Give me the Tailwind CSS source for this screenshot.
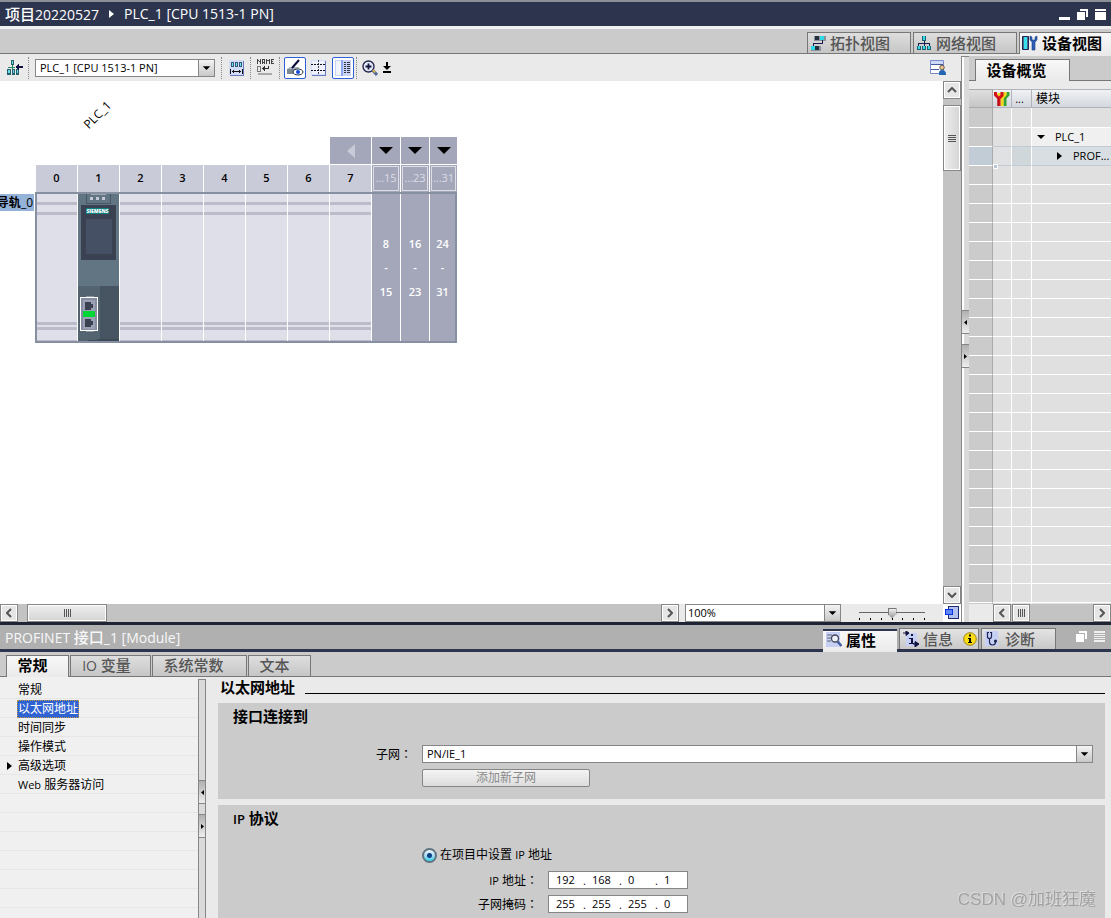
<!DOCTYPE html>
<html lang="zh-CN">

<head>
    <meta charset="UTF-8">
    <meta name="viewport" content="width=device-width, initial-scale=1.0">
    <title>项目20220527 - PLC_1</title>
    <script src="https://cdn.jsdelivr.net/npm/@tailwindcss/browser@4"></script>
</head>

<body class="flex h-screen flex-col overflow-hidden bg-[#eaeaea] font-['Open_Sans','Noto_Sans_CJK_SC',sans-serif] text-[11px] leading-4 text-black">
    <!-- title bar -->
    <header class="flex h-[29px] shrink-0 items-center border-t-2 border-b-3 border-t-[#8b8f96] border-b-[#f0f0f0] bg-[#2d354e] pr-1 pl-[5px] text-white">
        <h1 class="flex flex-1 items-center text-[14px] font-medium whitespace-nowrap">
            <span><span class="text-[15px]">项目</span>20220527</span>
            <svg class="mr-2.5 ml-2.5 h-2 w-[5px]" viewBox="0 0 5 8" fill="#fff"><path d="M0 0l5 4-5 4z" /></svg>
            <span>PLC_1 [CPU 1513-1 PN]</span>
        </h1>
        <div class="flex gap-1.5">
            <button aria-label="最小化"><svg class="h-3 w-3" viewBox="0 0 12 12" fill="#fff" shape-rendering="crispEdges"><path d="M0 9h11v3H0z" /></svg></button>
            <button aria-label="还原"><svg class="h-3 w-3" viewBox="0 0 12 12" fill="#fff" shape-rendering="crispEdges"><path d="M0 4h8v8H0zM3 1h8v8H9V3H3z" /></svg></button>
            <button aria-label="最大化"><svg class="h-3 w-3" viewBox="0 0 12 12" fill="#fff" shape-rendering="crispEdges"><path d="M0 1h11v2H0zM0 4h11v8H0z" /></svg></button>
        </div>
    </header>

    <!-- view tabs -->
    <nav class="flex h-[25px] shrink-0 items-end justify-end gap-0.5 border-b border-[#777] bg-[#cbcbcb] text-[15px] font-medium text-[#555]">
        <button class="flex h-[21px] w-[104px] items-center gap-1 border border-b-0 border-[#777] bg-linear-to-b from-[#dedede] to-[#c6c6c6] pl-0.5 leading-5">
            <svg class="h-4 w-4" viewBox="0 0 16 16" shape-rendering="crispEdges">
                <path d="M4 1h12v5H4zM1 11h10v5H1z" fill="#8b9199" /><path d="M5 1h4v4H5zM5 11h4v4H5z" fill="#24303e" /><path d="M10 1h4v4h-4zM1 11h4v4H1z" fill="#2fd9e6" />
                <path d="M12 5v3H3v3" fill="none" stroke="#1c1c50" stroke-width="1" />
            </svg>
            拓扑视图
        </button>
        <button class="flex h-[21px] w-[104px] items-center gap-1 border border-b-0 border-[#777] bg-linear-to-b from-[#dedede] to-[#c6c6c6] pl-0.5 leading-5">
            <svg class="h-4 w-4" viewBox="0 0 16 16" shape-rendering="crispEdges">
                <path d="M6 1h4v5H6zM1 11h4v4H1zM6 11h4v4H6zM11 11h4v4h-4z" fill="#24606e" /><path d="M7 1h2v4H7zM2 11h2v3H2zM7 11h2v3H7zM12 11h2v3h-2z" fill="#2fd9e6" />
                <path d="M8 6v5M2 8h12M2 8v3M13 8v3" fill="none" stroke="#1c1c50" />
            </svg>
            网络视图
        </button>
        <button class="-mb-px flex h-[22px] w-[92px] items-center gap-1 border-t border-l border-[#777] bg-linear-to-b from-[#f8f8f8] to-[#eaeaea] pb-0.5 pl-0.5 leading-5 font-bold text-black">
            <svg class="h-4 w-4" viewBox="0 0 16 16">
                <path d="M0.5 1.5h6v13h-6z" fill="#4a7188" stroke="#225" /><path d="M2 2h3v12H2z" fill="#38e0ee" />
                <path d="M8 1v4l2 2v8h3V7l2-2V1l-2 1v3h-3V2z" fill="#2c5fb4" stroke="#1c3d86" stroke-width=".6" />
            </svg>
            设备视图
        </button>
    </nav>

    <main class="flex min-h-0 flex-1">
        <!-- device view -->
        <section class="flex min-w-0 flex-1 flex-col">
            <div class="flex h-[27px] shrink-0 items-center pr-[15px] pl-[7px]">
                <button aria-label="设备"><svg class="h-4 w-4" viewBox="0 0 16 16" shape-rendering="crispEdges">
                    <path d="M4 0h3v5H4zM0 9h4v6H0zM5 9h3v6H5zM9 9h3v6H9z" fill="#28606c" /><path d="M5 1h1v3H5zM1 10h2v3H1zM6 10h1v3H6zM10 10h1v3h-1z" fill="#61dce2" />
                    <path d="M5 5v4M1 7h7" stroke="#286" fill="none" /><path d="M8 7l4-4v3h4v2h-4v3z" fill="#101040" />
                </svg></button>
                <span class="mr-1.5 ml-[5px] h-[22px] border-l border-dotted border-[#888]"></span>
                <div class="relative h-[18px] w-[180px] border border-[#868686] bg-white">
                    <select aria-label="选择设备" class="h-4 w-full appearance-none pl-1 leading-4">
                        <option>PLC_1 [CPU 1513-1 PN]</option>
                    </select>
                    <svg class="pointer-events-none absolute inset-y-0 right-0 h-4 w-4 border-l border-[#868686] bg-linear-to-b from-[#f4f4f4] to-[#c8c8c8]" viewBox="0 0 16 16"><path d="M4 6h8l-4 4z" /></svg>
                </div>
                <span class="mr-[7px] ml-1.5 h-[22px] border-l border-dotted border-[#888]"></span>
                <button aria-label="显示地址"><svg class="h-4 w-4" viewBox="0 0 16 16" shape-rendering="crispEdges">
                    <path d="M0 0h15v15H0z" fill="#d3dcf7" /><path d="M15 1v15H1v-1h13V1z" fill="#6679bd" /><path d="M2 2h3v5H2zM6 2h3v5H6zM10 2h3v5h-3z" fill="#357" /><path d="M3 3h1v3H3zM7 3h1v3H7zM11 3h1v3h-1z" fill="#6ee" />
                    <path d="M1 9h1v5H1zM13 9h1v5h-1zM3 11h9v1H3zM4 10h1v3H4zM10 10h1v3h-1z" fill="#111" />
                </svg></button>
                <span class="mr-1.5 ml-[5px] h-[22px] border-l border-dotted border-[#888]"></span>
                <button aria-label="显示名称"><svg class="h-[17px] w-[17px]" viewBox="0 0 17 17" shape-rendering="crispEdges">
                    <path d="M0 0h1v5H0zM1 1h1v1H1zM2 2h1v1H2zM3 0h1v5H3zM5 0h3v1H5zM5 0h1v5H5zM7 0h1v5H7zM5 3h3v1H5zM9 0h1v5H9zM10 1h2v1h-2zM12 0h1v5h-1zM14 0h3v1h-3zM14 0h1v5h-1zM14 2h2v1h-2zM14 4h3v1h-3z" fill="#444" />
                    <path d="M0 7h4v6H0zM1 8v4h2V8z" fill="#777" fill-rule="evenodd" /><path d="M11 7h1v3h-1zM5 9h6v1H5zM6 8h1v3H6zM7 7h1v5H7z" fill="#333" /><path d="M1 14h14v2H1z" fill="#aaa" />
                </svg></button>
                <span class="mr-1 ml-[5px] h-[22px] border-l border-dotted border-[#888]"></span>
                <button aria-label="显示标签" aria-pressed="true" class="flex h-[22px] w-[22px] items-center justify-center rounded-xs border border-[#2c62d6] bg-white"><svg class="h-[18px] w-[18px]" viewBox="0 0 18 18">
                    <path d="M1 10h10v5H1z" fill="#7d8793" /><path d="M1 10l3-2h10l-3 2z" fill="#a9b1ba" /><path d="M6 9L13 1" stroke="#0c0c3c" stroke-width="2" /><ellipse cx="12" cy="13" rx="5" ry="3" fill="#fff" stroke="#234" /><circle cx="12" cy="13" r="2" fill="#1448e0" />
                </svg></button>
                <button aria-label="网格" class="ml-[5px]"><svg class="h-4 w-4" viewBox="0 0 16 16" shape-rendering="crispEdges">
                    <path d="M0 0h15v15H0z" fill="#d5defa" /><path d="M1 1h13v13H1z" fill="#eef1fc" /><path d="M15 1v15H1v-1h13V1z" fill="#6679bd" /><path d="M7.500 0v15" stroke="#445" stroke-dasharray="2 1" /><path d="M0 4.500h15M0 10.500h15" stroke="#112" stroke-dasharray="2 1" />
                </svg></button>
                <button aria-label="设备概览" aria-pressed="true" class="ml-[5px] flex h-[22px] w-[22px] items-center justify-center rounded-xs border border-[#2c62d6] bg-white"><svg class="h-4 w-4" viewBox="0 0 16 16" shape-rendering="crispEdges">
                    <path d="M0 0h16v16H0z" fill="#c9d3f5" /><path d="M1 1h5v14H1z" fill="#f3f5fd" /><path d="M6 0h2v16H6z" fill="#8fa5ee" /><path d="M9 2h2v1H9zM12 2h3v1h-3zM9 4h2v1H9zM12 4h3v1h-3zM9 6h2v1H9zM12 6h3v1h-3zM9 8h2v1H9zM12 8h3v1h-3zM9 10h2v1H9zM12 10h3v1h-3zM9 12h2v1H9zM12 12h3v1h-3z" fill="#334" />
                </svg></button>
                <span class="mr-[5px] ml-0.5 h-[22px] border-l border-dotted border-[#888]"></span>
                <button aria-label="放大"><svg class="h-4 w-4" viewBox="0 0 16 16">
                    <circle cx="6.500" cy="6.500" r="5.500" fill="#e4ebfb" stroke="#26264e" stroke-width="1.400" /><path d="M3.500 6.500h6M6.500 3.500v6" stroke="#14143c" stroke-width="1.800" /><path d="M10.500 10l4.500 5" stroke="#4b679b" stroke-width="3" /><path d="M11 10l2 2.500" stroke="#e5b83c" stroke-width="2" />
                </svg></button>
                <button aria-label="更多" class="ml-[5px]"><svg class="h-[11px] w-2" viewBox="0 0 8 11"><path d="M3 0h2v4h3l-4 4-4-4h3zM0 9h8v2H0z" /></svg></button>
                <button aria-label="保存窗口设置" class="ml-auto"><svg class="h-4 w-4" viewBox="0 0 16 16">
                    <path d="M.5.5h13v13H.5z" fill="#fff" stroke="#7a8cc8" /><path d="M1 1h12v3H1z" fill="#cfd8f7" /><path d="M1 4.500h12M1 9.500h8" stroke="#445a9c" /><circle cx="12" cy="7.500" r="2.300" fill="#ebc28b" stroke="#333" stroke-width=".7" /><path d="M9 15v-2q0-3 3-3t4 3v2z" fill="#2467b4" />
                </svg></button>
            </div>

            <div class="flex min-h-0 flex-1">
                <!-- drawing canvas -->
                <div class="relative flex-1 overflow-hidden bg-white">
                    <span class="absolute top-[26px] left-[81px] -rotate-45 text-xs">PLC_1</span>
                    <span class="absolute top-[113px] left-0 flex h-[17px] w-[34px] items-center justify-end overflow-hidden bg-[#95b3d9] pr-px text-xs font-bold whitespace-nowrap">导轨<span class="font-normal">_0</span></span>

                    <div class="absolute top-14 left-[35px] w-[422px] text-[11px] font-semibold">
                        <div class="ml-[295px] grid grid-cols-[41px_28px_28px_27px] gap-px">
                            <button aria-label="折叠" class="flex h-[27px] items-center justify-center bg-[#a4a7ba]"><svg class="h-3.5 w-2" viewBox="0 0 8 14" fill="#c9cad8"><path d="M8 0v14L0 7z" /></svg></button>
                            <button aria-label="展开 8-15" class="flex h-[27px] items-center justify-center bg-[#a4a7ba]"><svg class="h-[7px] w-3.5" viewBox="0 0 14 7"><path d="M0 0h14L7 7z" /></svg></button>
                            <button aria-label="展开 16-23" class="flex h-[27px] items-center justify-center bg-[#a4a7ba]"><svg class="h-[7px] w-3.5" viewBox="0 0 14 7"><path d="M0 0h14L7 7z" /></svg></button>
                            <button aria-label="展开 24-31" class="flex h-[27px] items-center justify-center bg-[#a4a7ba]"><svg class="h-[7px] w-3.5" viewBox="0 0 14 7"><path d="M0 0h14L7 7z" /></svg></button>
                        </div>
                        <div class="mt-px ml-px grid h-[27px] grid-cols-[repeat(8,41px)_28px_28px_27px] gap-px text-center leading-[26px]">
                            <span class="bg-[#cacbd8]">0</span>
                            <span class="bg-[#cacbd8]">1</span>
                            <span class="bg-[#cacbd8]">2</span>
                            <span class="bg-[#cacbd8]">3</span>
                            <span class="bg-[#cacbd8]">4</span>
                            <span class="bg-[#cacbd8]">5</span>
                            <span class="bg-[#cacbd8]">6</span>
                            <span class="bg-[#cacbd8]">7</span>
                            <span class="border border-[#a4a7ba] bg-[#a4a7ba] leading-6 font-normal text-[#dddde4] inset-ring inset-ring-[#dddde4]">...15</span>
                            <span class="border border-[#a4a7ba] bg-[#a4a7ba] leading-6 font-normal text-[#dddde4] inset-ring inset-ring-[#dddde4]">...23</span>
                            <span class="border border-[#a4a7ba] bg-[#a4a7ba] leading-6 font-normal text-[#dddde4] inset-ring inset-ring-[#dddde4]">...31</span>
                        </div>
                        <div class="grid h-[151px] grid-cols-[40px_repeat(7,41px)_28px_28px_25px] gap-px border-2 border-[#8790a0] bg-white text-center text-white">
                            <!-- CPU module -->
                            <svg id="cpu" class="h-[147px] w-[41px]" viewBox="0 0 41 147" shape-rendering="crispEdges">
                                <path d="M0 0h41v147H0z" fill="#617583" />
                                <path d="M8 0h25v10H8z" fill="#475766" /><path d="M9 0h23v9H9z" fill="#617583" /><path d="M13 0h15v1H13z" fill="#a0a7b0" />
                                <path d="M12 3h3v3h-3zM18 3h3v3h-3zM24 3h3v3h-3z" fill="#c3c8d6" />
                                <path d="M3 11h35v55H3z" fill="#3a4252" /><path d="M8 25h26v35H8z" fill="#465064" /><path d="M8 14h23v6H8z" fill="#118080" />
                                <text x="19.500" y="19" font-size="5" font-weight="800" fill="#fff" text-anchor="middle">SIEMENS</text>
                                <path d="M0 92h22v55H0z" fill="#536370" /><path d="M22 92h19v55H22z" fill="#475563" /><path d="M20 145h21v2H10v-1h10z" fill="#3d4957" />
                                <path d="M8 102h8v36H8z" fill="#8d96a3" /><path d="M2 103h18v34H2z" fill="#fff" /><path d="M3 104h16v32H3z" fill="#858ca0" /><path d="M5 106h12v29H5z" fill="#9ba0b5" />
                                <path d="M7 108h6v2h2v4h-2v2H7zM7 125h6v2h2v4h-2v2H7z" fill="#3a4252" /><path d="M5 117h12v6H5z" fill="#00d735" />
                            </svg>
                            <div class="flex flex-col items-center gap-2 bg-[#a4a7ba] pt-[42px]"><span>8</span><span>-</span><span>15</span></div>
                            <div class="flex flex-col items-center gap-2 bg-[#a4a7ba] pt-[42px]"><span>16</span><span>-</span><span>23</span></div>
                            <div class="flex flex-col items-center gap-2 bg-[#a4a7ba] pt-[42px]"><span>24</span><span>-</span><span>31</span></div>
                        </div>
                    </div>
                </div>
                <!-- vertical scrollbar -->
                <div class="flex w-[18px] flex-col bg-[#c3c3c3]">
                    <button aria-label="向上" class="flex h-[18px] w-[18px] items-center justify-center border border-[#868686] bg-[#e6e6e6] inset-ring inset-ring-white"><svg class="h-1.5 w-2.5" viewBox="0 0 10 6" fill="none" stroke="#555" stroke-width="2"><path d="M1 5l4-4 4 4" /></svg></button>
                    <div class="mt-1.5 flex h-[66px] items-center justify-center border border-[#868686] bg-linear-to-r from-[#eee] to-[#d5d5d5] inset-ring inset-ring-white"><svg class="h-[7px] w-2" viewBox="0 0 8 7" shape-rendering="crispEdges"><path d="M0 0h8v1H0zM0 2h8v1H0zM0 4h8v1H0zM0 6h8v1H0z" fill="#555" /></svg></div>
                    <button aria-label="向下" class="mt-auto flex h-[18px] w-[18px] items-center justify-center border border-[#868686] bg-[#e6e6e6] inset-ring inset-ring-white"><svg class="h-1.5 w-2.5" viewBox="0 0 10 6" fill="none" stroke="#555" stroke-width="2"><path d="M1 1l4 4 4-4" /></svg></button>
                </div>
            </div>

            <!-- horizontal scrollbar and zoom -->
            <div class="flex h-[18px] shrink-0">
                <div class="flex flex-1 bg-[#c3c3c3]">
                    <button aria-label="向左" class="flex h-[18px] w-[18px] items-center justify-center border border-[#868686] bg-[#e6e6e6] inset-ring inset-ring-white"><svg class="h-2.5 w-1.5" viewBox="0 0 6 10" fill="none" stroke="#555" stroke-width="2"><path d="M5 1L1 5l4 4" /></svg></button>
                    <div class="ml-[9px] flex w-20 items-center justify-center border border-[#868686] bg-linear-to-b from-[#eee] to-[#d5d5d5] inset-ring inset-ring-white"><svg class="h-2 w-[7px]" viewBox="0 0 7 8" shape-rendering="crispEdges"><path d="M0 0h1v8H0zM2 0h1v8H2zM4 0h1v8H4zM6 0h1v8H6z" fill="#555" /></svg></div>
                    <button aria-label="向右" class="ml-auto flex h-[18px] w-[18px] items-center justify-center border border-[#868686] bg-[#e6e6e6] inset-ring inset-ring-white"><svg class="h-2.5 w-1.5" viewBox="0 0 6 10" fill="none" stroke="#555" stroke-width="2"><path d="M1 1l4 4-4 4" /></svg></button>
                </div>
                <div class="relative ml-1.5 h-[18px] w-[156px] border border-[#868686] bg-white">
                    <select aria-label="缩放" class="h-4 w-full appearance-none pl-0.5 leading-4">
                        <option>100%</option>
                    </select>
                    <svg class="pointer-events-none absolute inset-y-0 right-0 h-4 w-4 border-l border-[#868686] bg-linear-to-b from-[#f4f4f4] to-[#c8c8c8]" viewBox="0 0 16 16"><path d="M4 6h8l-4 4z" /></svg>
                </div>
                <div class="relative ml-[18px] w-[66px]">
                    <input type="range" aria-label="缩放滑块" value="50" class="block h-[18px] w-full appearance-none bg-[linear-gradient(transparent_8px,#666_8px_9px,transparent_9px)] [&::-webkit-slider-thumb]:h-[11px] [&::-webkit-slider-thumb]:w-[9px] [&::-webkit-slider-thumb]:appearance-none [&::-webkit-slider-thumb]:border [&::-webkit-slider-thumb]:border-[#777] [&::-webkit-slider-thumb]:bg-linear-to-b [&::-webkit-slider-thumb]:from-[#eee] [&::-webkit-slider-thumb]:to-[#999] [&::-webkit-slider-thumb]:[clip-path:polygon(0_0,100%_0,100%_60%,50%_100%,0_60%)]">
                    <svg class="pointer-events-none absolute bottom-0.5 left-0 h-0.5 w-full" viewBox="0 0 66 2" shape-rendering="crispEdges"><path d="M0 0h1v2H0zM11 0h1v2h-1zM22 0h1v2h-1zM33 0h1v2h-1zM43 0h1v2h-1zM54 0h1v2h-1zM65 0h1v2h-1z" /></svg>
                </div>
                <button aria-label="总览" class="ml-[18px] w-[18px] bg-white"><svg class="ml-px h-4 w-4" viewBox="0 0 16 16" shape-rendering="crispEdges"><path d="M4.500 1.500h10v12h-10z" fill="#b4c2ef" stroke="#1b2a72" /><path d="M1.500 4.500h7v5h-7z" fill="#5f86f5" stroke="#0a35e0" /></svg></button>
            </div>
        </section>

        <!-- device overview -->
        <aside class="flex w-[150px] shrink-0 pt-0.5">
            <div class="flex w-2 shrink-0 flex-col border-t border-l border-[#868686] bg-[#dadada] pt-[253px] inset-shadow-[2px_0_0_#fff]">
                <button aria-label="左移" class="flex h-6 items-center justify-end border-y border-[#868686] bg-linear-to-b from-[#b0b0b0] to-[#eee] pr-0.5"><svg class="h-[5px] w-[3px]" viewBox="0 0 3 5"><path d="M3 0v5L0 2.500z" /></svg></button>
                <button aria-label="右移" class="mt-2.5 flex h-6 items-center justify-end border-y border-[#868686] bg-linear-to-b from-[#b0b0b0] to-[#eee] pr-0.5"><svg class="h-[5px] w-[3px]" viewBox="0 0 3 5"><path d="M0 0v5l3-2.500z" /></svg></button>
            </div>
            <div class="flex min-w-0 flex-1 flex-col overflow-hidden">
                <div class="flex h-[25px] shrink-0 items-end border-b border-[#777] bg-[#cbcbcb] pl-1.5">
                    <button class="-mb-px h-[22px] w-[95px] border border-b-0 border-[#777] bg-linear-to-b from-[#f8f8f8] to-[#eaeaea] pr-3 pb-0.5 text-[15px] leading-5 font-bold">设备概览</button>
                </div>
                <div class="min-h-0 flex-1 overflow-hidden pt-2">
                    <table class="w-full table-fixed border-separate border-spacing-0">
                        <colgroup><col class="w-6"><col class="w-[19px]"><col class="w-5"><col></colgroup>
                        <thead>
                            <tr class="h-[19px] text-left">
                                <th class="border-y border-r border-[#aaa] bg-linear-to-b from-[#dedede] to-[#c6c6c6] p-0"></th>
                                <th class="border-y border-r border-[#b0b4ba] bg-linear-to-b from-[#f0f2f5] to-[#d3d7de] p-0"><svg class="h-4 w-[17px]" viewBox="0 0 17 16" fill="none" stroke-width="3">
                                    <path d="M9 2v2l3 3 3-3V1M12 7v8" stroke="#35a32f" /><path d="M6 2v2l3 3 3-3V1M9 7v8" stroke="#f4d51a" /><path d="M2.500 1v3L6 7.500 9 4.500V1M6 7v8" stroke="#d4121a" /><path d="M5 7v8" stroke="#a80c12" stroke-width="1" />
                                </svg></th>
                                <th class="border-y border-r border-[#b0b4ba] bg-linear-to-b from-[#f0f2f5] to-[#d3d7de] p-0 pr-1 text-center leading-[17px] font-normal">...</th>
                                <th class="border-y border-[#b0b4ba] bg-linear-to-b from-[#f0f2f5] to-[#d3d7de] p-0 pl-1 text-xs leading-[17px] font-normal">模块</th>
                            </tr>
                        </thead>
                        <tbody id="modules">
                            <tr class="h-5">
                                <td class="border-r border-b border-r-[#aaa] border-b-white bg-[#cbcbcb]"></td>
                                <td class="border-r border-b border-white bg-[#e0e0e0]"></td>
                                <td class="border-r border-b border-white bg-[#e0e0e0]"></td>
                                <td class="border-b border-white bg-[#e0e0e0]"></td>
                            </tr>
                            <tr class="h-[19px]">
                                <td class="border-r border-b border-r-[#aaa] border-b-white bg-[#cbcbcb]"></td>
                                <td class="border-r border-b border-r-white border-b-[#c0cbd6] bg-[#e0e0e0]"></td>
                                <td class="border-r border-b border-r-white border-b-[#c0cbd6] bg-[#e0e0e0]"></td>
                                <td class="border-b border-[#c0cbd6] bg-[#f0f0f0] p-0 pl-[5px]"><span class="flex items-center gap-2.5"><svg class="h-1 w-2" viewBox="0 0 8 4"><path d="M0 0h8L4 4z" /></svg>PLC_1</span></td>
                            </tr>
                            <tr class="h-[19px]">
                                <td class="border-r border-b border-r-[#aaa] border-b-white bg-[#c2ccd7]"></td>
                                <td class="relative border-r border-b border-r-white border-b-[#c0cbd6] bg-[#dfe1e3]"><span class="absolute -bottom-1 left-0 h-[5px] w-[5px] border border-white bg-[#b9c8d8]"></span></td>
                                <td class="border-r border-b border-r-white border-b-[#c0cbd6] bg-[#d0d7db]"></td>
                                <td class="border-b border-[#c0cbd6] bg-[#d9dee2] p-0 pl-[25px]"><span class="flex items-center gap-2.5 whitespace-nowrap"><svg class="h-2 w-1.5 shrink-0" viewBox="0 0 6 8"><path d="M0 0v8l5-4z" /></svg>PROF...</span></td>
                            </tr>
                        </tbody>
                    </table>
                </div>
                <div class="ml-6 flex h-[18px] shrink-0 bg-[#c3c3c3]">
                    <button aria-label="向左" class="flex h-[18px] w-[18px] items-center justify-center border border-[#868686] bg-[#e6e6e6] inset-ring inset-ring-white"><svg class="h-2.5 w-1.5" viewBox="0 0 6 10" fill="none" stroke="#555" stroke-width="2"><path d="M5 1L1 5l4 4" /></svg></button>
                    <div class="ml-px flex w-[18px] items-center justify-center border border-[#868686] bg-[#e6e6e6] inset-ring inset-ring-white"><svg class="h-2 w-[7px]" viewBox="0 0 7 8" shape-rendering="crispEdges"><path d="M0 0h1v8H0zM2 0h1v8H2zM4 0h1v8H4zM6 0h1v8H6z" fill="#555" /></svg></div>
                    <button aria-label="向右" class="ml-auto flex h-[18px] w-[18px] items-center justify-center border border-[#868686] bg-[#e6e6e6] inset-ring inset-ring-white"><svg class="h-2.5 w-1.5" viewBox="0 0 6 10" fill="none" stroke="#555" stroke-width="2"><path d="M1 1l4 4-4 4" /></svg></button>
                </div>
            </div>
        </aside>
    </main>

    <!-- inspector window -->
    <section class="flex h-[296px] shrink-0 flex-col">
        <div class="flex h-[30px] shrink-0 border-t-3 border-b-3 border-t-[#1f2435] border-b-[#2d354e] bg-[#b0b0b0] pr-[5px] pl-[5px]">
            <h2 class="flex-1 text-[14px] leading-6 font-medium text-[#f8f8f8]">PROFINET <span class="text-[15px]">接口</span>_1 [Module]</h2>
            <div class="flex items-end gap-0.5 text-[15px] font-medium text-[#555]">
                <button class="-mb-[3px] flex h-[23px] w-[74px] items-center gap-1 border-t-2 border-[#2d354e] bg-linear-to-b from-[#f8f8f8] to-[#eaeaea] pb-1 pl-[3px] leading-4 font-bold text-black">
                    <svg class="h-4 w-4" viewBox="0 0 16 16"><path d="M0 0h14v15H0z" fill="#c5d0f4" /><path d="M1 3h5M1 6h4M1 9h4" stroke="#667" /><circle cx="9" cy="6.500" r="3.500" fill="#eef2fd" stroke="#445" stroke-width="1.300" /><path d="M11.500 9.500l4 4.500" stroke="#3d5b98" stroke-width="2.400" /></svg>
                    属性
                </button>
                <button class="flex h-[21px] w-20 items-center gap-1 border border-b-0 border-[#777] bg-linear-to-b from-[#e4e4e4] to-[#c8c8c8] pl-[3px] leading-4">
                    <svg class="h-4 w-4" viewBox="0 0 16 16"><path d="M3 2h11v13H3z" fill="#c5d0f4" /><path d="M0 2h4M3 0l3 2-3 2.500zM10 13h4M12 10.500l4 2.500-4 3z" fill="#101040" stroke="#101040" /><path d="M8 3h2v2H8zM6 7h4v5h1v1H6v-1h2V8H6z" fill="#101040" /></svg>
                    信息
                    <svg class="ml-1.5 h-3.5 w-3.5" viewBox="0 0 14 14"><circle cx="7" cy="7" r="6.300" fill="#fbdd18" stroke="#9b8110" /><path d="M6 2.500h2v2H6zM5 6h3v4h1v1H5v-1h1V7H5z" /></svg>
                </button>
                <button class="flex h-[21px] w-[75px] items-center gap-1 border border-b-0 border-[#777] bg-linear-to-b from-[#e4e4e4] to-[#c8c8c8] pl-[3px] leading-4">
                    <svg class="h-4 w-4" viewBox="0 0 16 16"><path d="M0 0h13v15H0z" fill="#c5d0f4" /><path d="M4 1.500H2.500v4q0 2 2 2t2-2v-4H5M4.500 8v3q0 3 3 3t3-3" fill="none" stroke="#222250" stroke-width="1.200" /><circle cx="10.500" cy="10" r="1.600" fill="#222250" /></svg>
                    诊断
                </button>
            </div>
            <div class="ml-5 flex items-center gap-1.5 pb-0.5">
                <button aria-label="浮动"><svg class="h-3 w-3" viewBox="0 0 12 12" fill="#fff" shape-rendering="crispEdges"><path d="M0 4h8v8H0zM3 1h8v8H9V3H3z" /></svg></button>
                <button aria-label="折叠窗口"><svg class="h-3 w-3" viewBox="0 0 12 12" fill="#f0f0f0" shape-rendering="crispEdges"><path d="M0 1h11v2H0zM0 4h11v1H0zM0 6h11v1H0zM0 8h11v1H0zM0 10h11v2H0z" /></svg></button>
            </div>
        </div>

        <nav class="flex h-[25px] shrink-0 items-end gap-px border-b border-[#777] bg-[#cbcbcb] pl-1.5 text-[15px] font-medium text-[#555]">
            <button class="-mb-px h-[22px] w-[63px] border border-b-0 border-[#777] bg-linear-to-b from-[#f8f8f8] to-[#eaeaea] pr-2.5 pb-1 leading-4 font-bold text-black">常规</button>
            <button class="h-[21px] w-[81px] border border-b-0 border-[#777] bg-linear-to-b from-[#dedede] to-[#c6c6c6] pr-2 pb-0.5 leading-4"><span class="text-[14px]">IO</span> 变量</button>
            <button class="h-[21px] w-[95px] border border-b-0 border-[#777] bg-linear-to-b from-[#dedede] to-[#c6c6c6] pr-3 pb-0.5 leading-4">系统常数</button>
            <button class="h-[21px] w-[63px] border border-b-0 border-[#777] bg-linear-to-b from-[#dedede] to-[#c6c6c6] pr-2.5 pb-0.5 leading-4">文本</button>
        </nav>

        <div class="flex min-h-0 flex-1">
            <!-- property navigation -->
            <nav class="h-full w-[198px] shrink-0 overflow-hidden bg-[#f0f0f0] pt-[3px] text-xs">
                <ul class="leading-[18px] *:flex *:h-[19px] *:items-center *:border-b *:border-[#e6e6e6] *:pt-0.5 *:pl-[18px]">
                    <li><a href="#">常规</a></li>
                    <li><a href="#" class="-ml-px border border-dotted border-[#c89b3c] bg-[#2f62d2] leading-4 text-white">以太网地址</a></li>
                    <li><a href="#">时间同步</a></li>
                    <li><a href="#">操作模式</a></li>
                    <li class="relative"><svg class="absolute left-[7px] h-2 w-[5px]" viewBox="0 0 5 8"><path d="M0 0l5 4-5 4z" /></svg><a href="#">高级选项</a></li>
                    <li><a href="#"><span class="text-[11px]">Web</span> 服务器访问</a></li>
                    <li></li>
                    <li></li>
                    <li></li>
                    <li></li>
                    <li></li>
                    <li></li>
                </ul>
            </nav>
            <div class="mt-0.5 flex w-2 shrink-0 flex-col border-t border-r border-l border-[#868686] bg-[#dadada] pt-[100px]">
                <button aria-label="左移" class="flex h-6 items-center justify-center border-y border-[#868686] bg-linear-to-b from-[#b0b0b0] to-[#eee]"><svg class="h-[5px] w-[3px]" viewBox="0 0 3 5"><path d="M3 0v5L0 2.500z" /></svg></button>
                <button aria-label="右移" class="mt-2.5 flex h-6 items-center justify-center border-y border-[#868686] bg-linear-to-b from-[#b0b0b0] to-[#eee]"><svg class="h-[5px] w-[3px]" viewBox="0 0 3 5"><path d="M0 0v5l3-2.500z" /></svg></button>
            </div>

            <!-- ethernet address form -->
            <form class="flex min-w-0 flex-1 flex-col pr-1.5 pl-3">
                <div class="flex h-[26px] shrink-0 items-start gap-2.5">
                    <h3 class="pl-0.5 text-[15px] leading-5 font-bold">以太网地址</h3>
                    <span class="mt-4 h-px flex-1 bg-black"></span>
                </div>
                <section class="h-24 shrink-0 bg-[#cbcbcb] pt-1 pr-3">
                    <h4 class="pl-[15px] text-[15px] leading-[18px] font-bold">接口连接到</h4>
                    <div class="mt-5 grid grid-cols-[194px_1fr] items-center gap-x-2.5 gap-y-1.5">
                        <label for="subnet" class="text-right text-xs">子网<span class="font-['Noto_Sans_CJK_TC']" lang="zh-TW">：</span></label>
                        <div class="relative h-[18px] border border-[#868686] bg-white">
                            <select id="subnet" class="block h-4 w-full appearance-none pl-1 leading-4">
                                <option>PN/IE_1</option>
                            </select>
                            <svg class="pointer-events-none absolute inset-y-0 right-0 h-4 w-4 border-l border-[#868686] bg-linear-to-b from-[#f4f4f4] to-[#c8c8c8]" viewBox="0 0 16 16"><path d="M4 6h8l-4 4z" /></svg>
                        </div>
                        <button type="button" disabled class="col-start-2 h-[18px] w-[168px] rounded-xs border border-[#868686] bg-linear-to-b from-[#f4f4f4] to-[#dcdcdc] text-xs leading-4 text-[#8a8a8a]">添加新子网</button>
                    </div>
                </section>
                <section class="mt-1.5 flex-1 bg-[#cbcbcb] pt-1">
                    <h4 class="pl-[15px] text-[15px] leading-[18px] font-bold"><span class="text-[13px] font-semibold">IP</span> 协议</h4>
                    <div class="mt-[19px] ml-[204px] flex items-center gap-[3px]">
                        <input type="radio" id="setIp" name="ip" checked class="h-[15px] w-[15px] appearance-none rounded-full border-2 border-[#5f7480] bg-[radial-gradient(circle,#0b3f86_0_2px,transparent_3px),linear-gradient(#f2fbff,#a9d8ee_50%,#36d6ee)]">
                        <label for="setIp" class="text-xs">在项目中设置 <span class="text-[11px]">IP</span> 地址</label>
                    </div>
                    <div class="mt-2 grid grid-cols-[320px_140px] items-center gap-x-2.5 gap-y-1.5">
                        <label for="ip1" class="text-right text-xs"><span class="text-[11px]">IP</span> 地址<span class="font-['Noto_Sans_CJK_TC']" lang="zh-TW">：</span></label>
                        <div class="flex h-[18px] border border-[#868686] bg-white pl-[7px] leading-[18px]">
                            <input id="ip1" value="192" class="w-6"><span class="w-3 pl-[3px]">.</span>
                            <input aria-label="IP 2" value="168" class="w-6"><span class="w-3 pl-[3px]">.</span>
                            <input aria-label="IP 3" value="0" class="w-6"><span class="w-3 pl-[3px]">.</span>
                            <input aria-label="IP 4" value="1" class="w-5">
                        </div>
                        <label for="mask1" class="text-right text-xs">子网掩码<span class="font-['Noto_Sans_CJK_TC']" lang="zh-TW">：</span></label>
                        <div class="flex h-[18px] border border-[#868686] bg-white pl-[7px] leading-[18px]">
                            <input id="mask1" value="255" class="w-6"><span class="w-3 pl-[3px]">.</span>
                            <input aria-label="掩码 2" value="255" class="w-6"><span class="w-3 pl-[3px]">.</span>
                            <input aria-label="掩码 3" value="255" class="w-6"><span class="w-3 pl-[3px]">.</span>
                            <input aria-label="掩码 4" value="0" class="w-5">
                        </div>
                    </div>
                </section>
            </form>
        </div>
    </section>

    <p class="pointer-events-none fixed right-[15px] bottom-1.5 font-['Liberation_Sans','Noto_Sans_CJK_SC',sans-serif] text-[17px] leading-6 text-[#a2a2a2] text-shadow-[-1px_-1px_0_#dedede]">CSDN @加班狂魔</p>

    <script>
        // empty slots of the rack: slot 0 before the CPU, slots 2-7 after it
        const cpu = document.getElementById('cpu');
        const slot = '<div class="bg-[linear-gradient(#dfdfe9_8px,#bbbbca_8px_11px,#dfdfe9_11px_18px,#bbbbca_18px_21px,#dfdfe9_21px_128px,#bbbbca_128px_131px,#dfdfe9_131px_133px,#bbbbca_133px_136px,#dfdfe9_136px_146px,#bbbbca_146px)]"></div>';
        cpu.insertAdjacentHTML('beforebegin', slot);
        cpu.insertAdjacentHTML('afterend', slot.repeat(6));

        // empty rows of the overview table
        const row = `<tr class="h-[19px]">
            <td class="border-r border-b border-r-[#aaa] border-b-white bg-[#cbcbcb]"></td>
            <td class="border-r border-b border-white bg-[#e0e0e0]"></td>
            <td class="border-r border-b border-white bg-[#e0e0e0]"></td>
            <td class="border-b border-white bg-[#e0e0e0]"></td>
        </tr>`;
        document.getElementById('modules').insertAdjacentHTML('beforeend', row.repeat(40));
    </script>
</body>

</html>
